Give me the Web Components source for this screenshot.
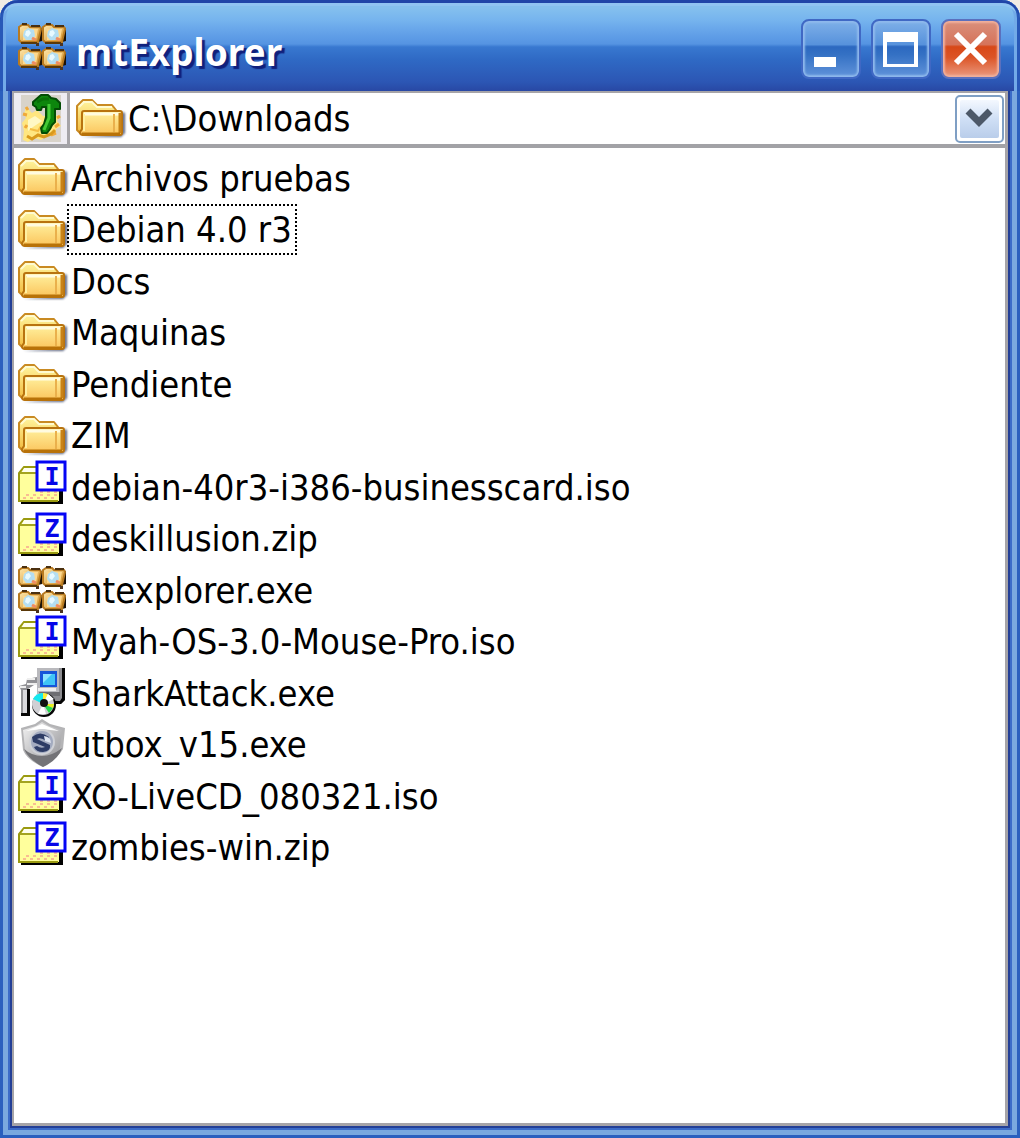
<!DOCTYPE html>
<html lang="es">
<head>
<meta charset="utf-8">
<title>mtExplorer</title>
<style>
  body {
    margin: 0;
    background: #f1ece4;
    color: #000;
    font-family: "DejaVu Sans Condensed", "Noto Sans", sans-serif;
    font-size: 36px;
  }
</style>
</head>
<body>

<mt-window caption="mtExplorer">
  <mt-address-bar slot="toolbar" path="C:\Downloads"></mt-address-bar>
  <mt-file-list></mt-file-list>
</mt-window>

<script>
const files = [
  { name: "Archivos pruebas", icon: "folder" },
  { name: "Debian 4.0 r3", icon: "folder", focused: true },
  { name: "Docs", icon: "folder" },
  { name: "Maquinas", icon: "folder" },
  { name: "Pendiente", icon: "folder" },
  { name: "ZIM", icon: "folder" },
  { name: "debian-40r3-i386-businesscard.iso", icon: "iso" },
  { name: "deskillusion.zip", icon: "zip" },
  { name: "mtexplorer.exe", icon: "app" },
  { name: "Myah-OS-3.0-Mouse-Pro.iso", icon: "iso" },
  { name: "SharkAttack.exe", icon: "setup" },
  { name: "utbox_v15.exe", icon: "shield" },
  { name: "XO-LiveCD_080321.iso", icon: "iso" },
  { name: "zombies-win.zip", icon: "zip" }
];

// one little folder of the application icon, drawn four times
const miniFolder = (x, y) => `
  <g transform="translate(${x} ${y})">
    <path d="M20 5l4 1v13l-4 1-1-3z" fill="#1c1206"/>
    <path d="M1 5l3-2h6l2 2h10l1 2-3 13H3L1 18z" fill="url(#gold)" stroke="#b87a20" stroke-width="2"/>
    <path d="M4 1h5v2H4zM13 3h9v2h-9z" fill="#4a3010"/>
    <path d="M3 20h16v2H3z" fill="#5a3808"/>
    <path d="M5 7h15l-2 11H5z" fill="#ffd98e"/>
    <path d="M6 9l4-3 6 2 1 6-3 4H8l-3-4z" fill="#b4def2"/>
    <path d="M8 9l3-1 2 3-3 4-3-2z" fill="#e8f9ff"/>
    <path d="M14 16l4 2" stroke="#ef8c62" stroke-width="3"/>
    <path d="M18 21h3v3h-3z" fill="#4c3420"/>
  </g>`;

// yellow archive with its type letter in a blue frame
const archive = letter => `
  <path d="M3 37h42v4H3zM41 28h4v13h-4z" fill="#000"/>
  <path d="M1 38V9l5-6h14l4 5h17v30z" fill="#ffff9c"/>
  <path d="M40 38H1V10l5-6h14" fill="none" stroke="#9a9a10" stroke-width="2"/>
  <path d="M6 5h13v4H4z" fill="#fffff0"/>
  <path d="M2 10h17" stroke="#a4a420" stroke-width="2"/>
  <path d="M5 35h34M8 32h32M22 29h18" stroke="#f8bd92" stroke-width="2" stroke-dasharray="3 4"/>
  <rect x="19" y="-1" width="28" height="28" fill="#fff" stroke="#0505f5" stroke-width="3"/>
  <text x="34" y="22" text-anchor="middle" font-family="DejaVu Sans Mono, monospace" font-weight="bold" font-size="25" fill="#0505e8">${letter}</text>`;

const icons = {
  folder: `
    <path d="M5 42h40l4-4V18l-3-1v22z" fill="#303c60" opacity=".8" filter="url(#soft)"/>
    <path d="M1 35V11l3-3 3-3h9l5 5h15l4 5v20l-6 4H5z" fill="url(#sun)" stroke="#c98a22" stroke-width="2" stroke-linejoin="round"/>
    <path d="M3 12l5-5h8l5 5h15" fill="none" stroke="#fffbd0" stroke-width="2"/>
    <path d="M6 18q0-2 2-2h36q2 0 2 2v20q0 2-2 2H7q-3 0-3-3l2-3z" fill="url(#amber)" stroke="#b8730f" stroke-width="2"/>
    <path d="M8 19h35" stroke="#fffbe0" stroke-width="3"/>
    <path d="M8 19v17" stroke="#fff0a0" stroke-width="2"/>
    <path d="M38 19v18" stroke="#eab04c" stroke-width="2"/>
    <path d="M44 18v20" stroke="#c88218" stroke-width="3"/>
    <path d="M6 39h38" stroke="#b87208" stroke-width="3"/>`,

  iso: archive("I"),
  zip: archive("Z"),

  app: miniFolder(0, -1) + miniFolder(24, -1) + miniFolder(0, 23) + miniFolder(24, 23),

  setup: `
    <path d="M23 -1h24v32l-4 4h-8l-13-7z" fill="#8c8c90"/>
    <path d="M19 -1h22v26H19z" fill="#b9b9bd"/>
    <path d="M44 -1h3v32l-4 4h-9v-3h8l2-3z" fill="#050505"/>
    <path d="M22 2h17v16H22z" fill="#1655d8"/>
    <path d="M25 5h12v11H25z" fill="#3fc4f6"/>
    <path d="M25 5h9l-9 9z" fill="#8de4ff"/>
    <path d="M20 19h18v3H20z" fill="#ededed"/>
    <path d="M21 23h21v4H21z" fill="#6e6e72"/>
    <path d="M1 17l7-2 1-5 10-2v6l-9 6v26H3V21z" fill="#929296"/>
    <path d="M9 15h10M2 18h6M9 10h8" stroke="#eee" stroke-width="2"/>
    <path d="M5 21h4v23H5z" fill="#d8d8dc"/>
    <path d="M9 20h3v27H3v-3h6z" fill="#050505"/>
    <circle cx="26" cy="36" r="12" fill="#050505"/>
    <circle cx="25" cy="35" r="11" fill="#d0d0d4"/>
    <path d="M25 35L15 30q3-6 10-6z" fill="#15e8ee"/>
    <path d="M25 35V24l5 1z" fill="#ffee32"/>
    <path d="M25 35l5-10 6 5z" fill="#fff"/>
    <path d="M25 35l11 0-1 4z" fill="#e8ef20"/>
    <path d="M25 35l10 4-4 5z" fill="#25d84c"/>
    <path d="M25 35l3 10-8 0z" fill="#fff"/>
    <circle cx="26" cy="34" r="4" fill="#111"/>`,

  shield: `
    <path d="M3 7l14-4 7-5 8 5 15 4-2 21q-6 10-20 18Q9 39 5 29z" fill="#b4b4b6"/>
    <path d="M5 9l13-4 6-4 7 4 13 4-2 18q-5 9-18 16Q11 37 7 28z" fill="url(#steel)"/>
    <path d="M6 28q8 7 18 7t20-8q-4 12-19 19Q10 38 6 28z" fill="#737377"/>
    <path d="M8 10l16-7 17 7-17-2z" fill="#fff"/>
    <circle cx="24" cy="21" r="13" fill="#cfd1d6"/>
    <circle cx="24" cy="21" r="11" fill="#a3abc0"/>
    <path d="M14 16q8-7 17 0l-3 4q-5-4-9-2l13 6q1 6-7 7-7 0-9-5l3-1q4 3 8 1l-12-5z" fill="#2d3c66"/>
    <path d="M26 15q7 1 7 7l-6-2z" fill="#dfe6f2"/>`,

  up: `
    <path d="M3 0h40v47H3z" fill="#d8d3ca"/>
    <path d="M8 12l6 6 5-3 6 6 8 1 8-2-2 6 4 5-5 3-1 6-8 1-6 4-7-2-6 4-5-2 1-9-2-8 4-5-2-4z" fill="#ffe680"/>
    <path d="M8 12l2 3M5 19l4 1M42 21l-3 2M41 29l-4 3M38 38l-5 2M7 33l2-3" stroke="#f0a93a" stroke-width="3"/>
    <path d="M10 25l7-4 7 5-9 6-5 4z" fill="#fff8c4"/>
    <path d="M9 41l5 3 6-4 6 2 7-3 4-4" fill="none" stroke="#d99a1c" stroke-width="3"/>
    <path d="M12 34l8 2 3-5" fill="none" stroke="#f4bd44" stroke-width="2"/>
    <path d="M23 0h7l3 3 5 1 4 4v6h-5v13l-3 3-2 4-3 4h-5l-1-5 3-4 2-7V12h-4l-1 3h-4l-1-3-3-2V7z" fill="#0d860d" stroke="#034c05" stroke-width="2" stroke-linejoin="round"/>
    <path d="M31 9v14l-3 7-2 5" fill="none" stroke="#43c936" stroke-width="3"/>
    <path d="M19 7l6-3h6" fill="none" stroke="#087008" stroke-width="3"/>`
};

const iconTemplate = document.createElement("template");
iconTemplate.innerHTML = `
  <style>
    :host { display: block; flex: none; width: 48px; height: 48px; }
    svg { display: block; width: 48px; height: 48px; overflow: visible; }
  </style>
  <svg viewBox="0 0 48 48" aria-hidden="true">
    <defs>
      <linearGradient id="sun" x1="0" y1="0" x2="0" y2="1">
        <stop offset="0" stop-color="#fff6a0"/><stop offset="1" stop-color="#f2b93c"/>
      </linearGradient>
      <linearGradient id="amber" x1="0" y1="0" x2="0" y2="1">
        <stop offset="0" stop-color="#fff2a0"/><stop offset="1" stop-color="#fbc45c"/>
      </linearGradient>
      <linearGradient id="gold" x1="0" y1="0" x2="1" y2="1">
        <stop offset="0" stop-color="#ffe9ae"/><stop offset="1" stop-color="#d08c22"/>
      </linearGradient>
      <linearGradient id="steel" x1="0" y1="0" x2="1" y2="1">
        <stop offset="0" stop-color="#f4f4f4"/><stop offset="1" stop-color="#8f8f93"/>
      </linearGradient>
      <filter id="soft"><feGaussianBlur stdDeviation="1"/></filter>
    </defs>
    <g></g>
  </svg>
`;

class MtIcon extends HTMLElement {
  constructor() {
    super();
    this.attachShadow({ mode: "open" }).append(iconTemplate.content.cloneNode(true));
  }

  static observedAttributes = ["name"];

  attributeChangedCallback(_, __, value) {
    this.shadowRoot.querySelector("g").innerHTML = icons[value] || "";
  }
}
customElements.define("mt-icon", MtIcon);


const captionGlyphs = {
  minimize: `<path d="M13 38h22v10H13z" fill="#fff"/>`,
  maximize: `<path d="M12 13h35v35H12zM16 23v22h27V23z" fill="#fff" fill-rule="evenodd"/>`,
  close: `<path d="M15 15l29 29M44 15L15 44" stroke="#fff" stroke-width="6"/>`
};

class MtCaptionButton extends HTMLElement {
  constructor() {
    super();
    this.attachShadow({ mode: "open" });
  }

  connectedCallback() {
    const action = this.getAttribute("action");
    this.shadowRoot.innerHTML = `
      <style>
        :host { display: block; }
        button {
          display: block;
          width: 60px;
          height: 60px;
          padding: 0;
          border: 2px solid #4068c4;
          border-radius: 8px;
          background: linear-gradient(#7fb0e8, #5792dc 42%, #2c68c0 46%, #3471c4 60%, #6193da);
          box-shadow: inset 0 0 2px 2px #8fb9ec;
        }
        button.close {
          border-color: #5b70bd;
          background: linear-gradient(#d9907c, #d6735a 42%, #d84818 46%, #dc5426 65%, #ea9a80);
          box-shadow: inset 0 0 2px 2px #f0b09c;
        }
        svg { display: block; width: 56px; height: 56px; }
      </style>
      <button type="button" class="${action}" aria-label="${action}">
        <svg viewBox="2 2 56 56" aria-hidden="true">${captionGlyphs[action]}</svg>
      </button>
    `;
  }
}
customElements.define("mt-caption-button", MtCaptionButton);


const windowTemplate = document.createElement("template");
windowTemplate.innerHTML = `
  <style>
    :host {
      display: flex;
      flex-direction: column;
      box-sizing: border-box;
      min-height: 100vh;
      padding: 0 12px 12px;
      border-radius: 18px 18px 0 0;
      overflow: hidden;
      background: #233f96;
      box-shadow: inset 0 0 0 3px #2b5fbe, inset 0 0 0 8px #7aa8df, inset 0 0 0 10px #3b6bc8;
    }
    header {
      display: flex;
      align-items: center;
      gap: 10px;
      box-sizing: border-box;
      height: 91px;
      margin: 0 -12px;
      padding: 6px 19px 0 18px;
      border-radius: 18px 18px 0 0;
      background: linear-gradient(#84c0ee 8px, #76b4ee 20px, #62a0e8 34px, #5594e2 44px, #3878d0 47px, #2f69c4 60px, #2c56b4 82px, #2848a4);
      box-shadow: inset 0 3px #2045a8, inset 3px 0 #2858b8, inset -3px 0 #2858b8, inset 0 6px #90c4f2, inset 6px 0 #72aae8, inset -6px 0 #72aae8;
    }
    h1 {
      flex: 1;
      margin: 0;
      padding-top: 6px;
      color: #fff;
      font: bold 37px/48px "Noto Sans", "Open Sans", sans-serif;
      text-shadow: 3px 3px 1px #10207c;
    }
    mt-icon { margin-top: -4px; }
    nav { display: flex; gap: 10px; }
    main {
      display: flex;
      flex: 1;
      flex-direction: column;
      border: solid #a6a4a8;
      border-width: 0 3px 3px 2px;
      background: #fff;
    }
  </style>
  <header>
    <mt-icon name="app"></mt-icon>
    <h1></h1>
    <nav>
      <mt-caption-button action="minimize"></mt-caption-button>
      <mt-caption-button action="maximize"></mt-caption-button>
      <mt-caption-button action="close"></mt-caption-button>
    </nav>
  </header>
  <main>
    <slot name="toolbar"></slot>
    <slot></slot>
  </main>
`;

class MtWindow extends HTMLElement {
  constructor() {
    super();
    const shadow = this.attachShadow({ mode: "open" });
    shadow.append(windowTemplate.content.cloneNode(true));
    shadow.querySelector("h1").textContent = this.getAttribute("caption");
  }
}
customElements.define("mt-window", MtWindow);


const addressTemplate = document.createElement("template");
addressTemplate.innerHTML = `
  <style>
    :host {
      display: flex;
      box-sizing: border-box;
      height: 57px;
      border-top: 2px solid #a6a4a8;
      border-bottom: 4px solid #a2a2a6;
    }
    button {
      width: 53px;
      padding: 0 4px;
      border: 0;
      background: #eeecf2;
    }
    .combo {
      display: grid;
      flex: 1;
      grid-template-columns: 52px 1fr 50px;
      align-items: center;
      border-left: 3px solid #a6a4a8;
      padding-left: 6px;
      background: #fff;
    }
    mt-icon { grid-area: 1 / 1; }
    select {
      grid-area: 1 / 2 / 2 / 4;
      width: 100%;
      height: 50px;
      padding: 0;
      border: 0;
      appearance: none;
      background: none;
      color: inherit;
      font: inherit;
      outline: none;
    }
    svg {
      grid-area: 1 / 3;
      width: 50px;
      height: 48px;
      pointer-events: none;
    }
  </style>
  <button type="button" aria-label="Subir"><mt-icon name="up"></mt-icon></button>
  <div class="combo">
    <mt-icon name="folder"></mt-icon>
    <select aria-label="Ruta"><option></option></select>
    <svg viewBox="0 0 50 48" aria-hidden="true">
      <defs>
        <linearGradient id="face" x1="0" y1="0" x2="0" y2="1">
          <stop offset="0" stop-color="#f4f8ff"/>
          <stop offset=".5" stop-color="#cfdff5"/>
          <stop offset="1" stop-color="#b9cdea"/>
        </linearGradient>
      </defs>
      <rect x="1" y="1" width="47" height="46" rx="4" fill="#fff" stroke="#7f9fc4" stroke-width="2"/>
      <rect x="5" y="5" width="39" height="38" rx="2" fill="url(#face)"/>
      <path d="M13 16l11 11 11-11" fill="none" stroke="#4c5868" stroke-width="7"/>
    </svg>
  </div>
`;

class MtAddressBar extends HTMLElement {
  constructor() {
    super();
    const shadow = this.attachShadow({ mode: "open" });
    shadow.append(addressTemplate.content.cloneNode(true));
    shadow.querySelector("option").textContent = this.getAttribute("path");
  }
}
customElements.define("mt-address-bar", MtAddressBar);


const itemTemplate = document.createElement("template");
itemTemplate.innerHTML = `
  <style>
    :host { display: flex; align-items: center; gap: 1px; }
    button {
      box-sizing: border-box;
      height: 51px;
      padding: 0 3px 0 2px;
      border: 2px solid transparent;
      background: none;
      color: inherit;
      font: inherit;
      line-height: 47px;
      white-space: nowrap;
      outline: none;
    }
    :host([focused]) button { border: 2px dotted #000; }
  </style>
  <mt-icon></mt-icon>
  <button type="button"><slot></slot></button>
`;

class MtFileItem extends HTMLElement {
  constructor() {
    super();
    this.attachShadow({ mode: "open" }).append(itemTemplate.content.cloneNode(true));
  }

  static observedAttributes = ["icon"];

  attributeChangedCallback(_, __, value) {
    this.shadowRoot.querySelector("mt-icon").setAttribute("name", value);
  }
}
customElements.define("mt-file-item", MtFileItem);


class MtFileList extends HTMLElement {
  constructor() {
    super();
    this.attachShadow({ mode: "open" }).innerHTML = `
      <style>
        :host { display: block; padding: 4px; }
        mt-file-item { height: 51px; }
        mt-file-item:nth-of-type(odd) { height: 52px; }
      </style>
    `;
    files.forEach(f => {
      const item = document.createElement("mt-file-item");
      item.setAttribute("icon", f.icon);
      item.toggleAttribute("focused", !!f.focused);
      item.textContent = f.name;
      this.shadowRoot.append(item);
    })
  }
}
customElements.define("mt-file-list", MtFileList);
</script>
</body>
</html>
